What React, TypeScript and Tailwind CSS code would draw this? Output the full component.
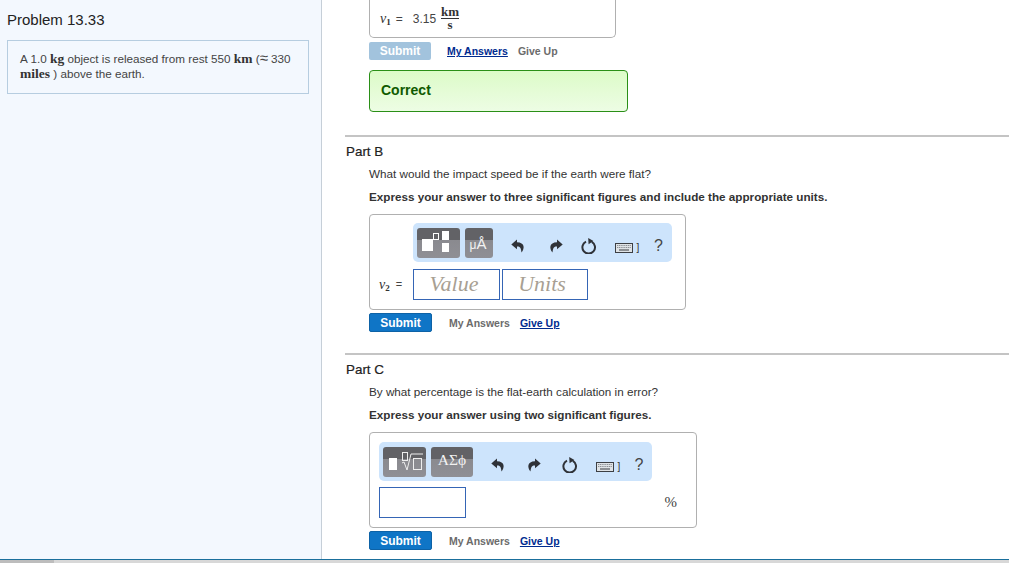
import React from "react";

const S = "font-['Liberation_Sans',Arial,sans-serif]";
const M = "font-['Liberation_Serif','Times_New_Roman',serif]";

function Undo({ flip }: { flip?: boolean }) {
  return (
    <svg width="14" height="14" viewBox="0 0 14 14" className={flip ? "-scale-x-100" : ""}>
      <path d="M6 0.5 L0.3 5.5 L6 10.2 V7.6 C8.8 7.4 10 8.8 10.5 13.5 C13.8 9.5 14 3.4 6 3.2 Z" fill="#2f3238" />
    </svg>
  );
}

function Reset() {
  return (
    <svg width="16" height="16" viewBox="0 0 16 16">
      <path d="M5 3.6 A6.3 6.3 0 1 0 10.8 3.8" fill="none" stroke="#2f3238" strokeWidth="2" />
      <path d="M7.2 0 L12.4 3 L7.6 6.2 Z" fill="#2f3238" />
    </svg>
  );
}

function Keyboard() {
  return (
    <div className="flex items-center gap-[4px]">
      <svg width="18" height="10" viewBox="0 0 18 10">
        <rect x="0.5" y="0.5" width="17" height="9" fill="#dfe3e6" stroke="#3c3f44" />
        <path d="M2 2.5h14M2 4.5h14" stroke="#8d9196" strokeWidth="1" strokeDasharray="1.2 .6" />
        <path d="M4 7h10" stroke="#55585c" strokeWidth="1.2" />
      </svg>
      <span className={`${S} text-[10px] leading-none text-[#333]`}>]</span>
    </div>
  );
}

function Tool({ w, children }: { w: string; children: React.ReactNode }) {
  return (
    <div className={`${w} h-[30px] rounded-[3px] bg-[linear-gradient(#626266_0,#626266_40%,#8a8a8f_40%,#8f8f95_100%)] flex items-center justify-center text-white overflow-hidden`}>
      {children}
    </div>
  );
}

function Actions({ widths }: { widths: string[] }) {
  return (
    <div className="flex items-center pt-[6px]">
      <div className={`${widths[0]} flex justify-center shrink-0`}><Undo /></div>
      <div className={`${widths[1]} flex justify-center shrink-0`}><Undo flip /></div>
      <div className={`${widths[2]} flex justify-center shrink-0`}><Reset /></div>
      <div className={`${widths[3]} flex justify-center shrink-0 pt-[5px]`}><Keyboard /></div>
      <div className={`${widths[4]} flex justify-center shrink-0 ${S} text-[16px] leading-none text-[#444]`}>?</div>
    </div>
  );
}

function LinkRow({ active }: { active: "my" | "give" }) {
  const link = "text-[#002b8f] underline";
  const dim = "text-[#6b6b6b]";
  return (
    <div className={`flex items-center ${S} text-[10.5px] font-bold leading-none pt-px`}>
      <span className={`${active === "my" ? "ml-[16px]" : "ml-[17px]"} ${active === "my" ? link : dim}`}>My Answers</span>
      <span className={`ml-[10px] ${active === "give" ? link : dim}`}>Give Up</span>
    </div>
  );
}

function Submit({ disabled }: { disabled?: boolean }) {
  return (
    <button className={`${S} rounded-[2px] text-[12px] font-bold leading-none text-white ${disabled ? "w-[62px] h-[18px] bg-[#a2c3dd]" : "w-[63px] h-[19px] bg-[#0f75c6] border border-[#0d62a6]"}`}>
      Submit
    </button>
  );
}

function Part({ title, text, bold }: { title: string; text: string; bold: string }) {
  return (
    <>
      <div className="h-[2px] bg-[#c4c4c4]" />
      <h2 className={`${S} ml-px mt-[7px] text-[13.4px] font-normal leading-[16px] text-[#222] [-webkit-text-stroke:0.2px_#222]`}>{title}</h2>
      <p className={`${S} ml-6 mt-[6px] text-[11.7px] leading-[16px] text-[#333]`}>{text}</p>
      <p className={`${S} ml-6 mt-[7px] text-[11.7px] font-bold leading-[16px] text-[#333]`}>{bold}</p>
    </>
  );
}

const mathBold = `${M} text-[13.5px] font-bold text-[#333]`;

export default function App() {
  return (
    <div className={`${S} w-[1009px] h-[563px] overflow-hidden flex flex-col bg-white`}>
      <div className="flex flex-1 min-h-0">
        <aside className="w-[322px] shrink-0 bg-[#f3f8fe] border-r border-[#c6cfd8] pl-[7px] pr-[12px] pt-[11px]">
          <h1 className="text-[15px] font-normal leading-[18px] text-[#222]">Problem 13.33</h1>
          <div className="mt-[11px] h-[54px] border border-[#b6cde0] px-3 py-[9px] text-[11.7px] leading-[15px] text-[#444]">
            A 1.0 <span className={mathBold}>kg</span> object is released from rest 550 <span className={mathBold}>km</span> (<span className="text-[15px] leading-none">≈</span> 330<br />
            <span className={mathBold}>miles</span> ) above the earth.
          </div>
        </aside>
        <main className="flex-1 min-w-0 pl-[23px]">
          <div className="ml-6 w-[247px] h-[38px] border border-t-0 border-[#b0b0b0] rounded-b-[5px] pl-[10px] flex items-center text-[12px] text-[#444]">
            <span className={`${M} italic text-[14px] text-[#333]`}>v<sub className="not-italic text-[9px] font-bold">1</sub></span>
            <span className="ml-[5px]">=</span>
            <span className="ml-[10px]">3.15</span>
            <span className={`${M} ml-[5px] inline-flex flex-col items-center font-bold text-[13px] leading-[10px] text-[#333]`}>
              <span className="border-b border-[#333] pb-[1px]">km</span>
              <span className="pt-[1px]">s</span>
            </span>
          </div>
          <div className="ml-6 mt-1 flex items-center"><Submit disabled /><LinkRow active="my" /></div>
          <div className="ml-6 mt-[10px] w-[259px] h-[42px] rounded-[4px] border border-[#2a8f17] bg-[linear-gradient(#dcfbc8,#edfde4)] pl-[11px] pb-[2px] flex items-center text-[14px] font-bold text-[#0f5a00]">Correct</div>

          <div className="mt-[23px]">
            <Part title="Part B" text="What would the impact speed be if the earth were flat?" bold="Express your answer to three significant figures and include the appropriate units." />
          </div>
          <div className="ml-6 mt-[9px] w-[317px] h-[96px] border border-[#b0b0b0] rounded-[4px] pt-2 pl-[43px]">
            <div className="w-[259px] h-[39px] rounded-[5px] bg-[#cde4fc] flex items-center pl-[4px]">
              <div className="flex gap-[5px]">
                <Tool w="w-[43px]">
                  <svg width="43" height="30" viewBox="0 0 43 30" fill="#fff">
                    <rect x="5" y="11" width="11" height="12" />
                    <rect x="16.5" y="5.5" width="5" height="6" fill="none" stroke="#fff" />
                    <rect x="25" y="3" width="7" height="9" />
                    <rect x="25" y="15" width="7" height="9" />
                  </svg>
                </Tool>
                <Tool w="w-[28px]">
                  <span className={`${S} flex items-baseline pt-[1px] pr-[2px] font-light text-[#f2f2f2]`}>
                    <span className="text-[12px] leading-none">μ</span>
                    <span className="text-[15px] leading-none">Å</span>
                  </span>
                </Tool>
              </div>
              <Actions widths={["w-[50px]", "w-[26px]", "w-[40px]", "w-[36px]", "w-[27px]"]} />
            </div>
            <div className="-ml-[34px] mt-[7px] flex items-center">
              <span className="w-[34px] text-[11px] text-[#444] flex items-center gap-[6px]">
                <span className={`${M} italic text-[14px] text-[#333]`}>v<sub className="not-italic text-[9px] font-bold">2</sub></span>
                <span>=</span>
              </span>
              <div className={`${M} w-[87px] h-[31px] border border-[#3565b5] pr-[5px] text-center italic text-[22px] leading-[27px] text-[#a89f93]`}>Value</div>
              <div className={`${M} ml-[2px] w-[86px] h-[31px] border border-[#3565b5] pr-[6px] text-center italic text-[22px] leading-[27px] text-[#a89f93]`}>Units</div>
            </div>
          </div>
          <div className="ml-6 mt-[3px] flex items-center"><Submit /><LinkRow active="give" /></div>

          <div className="mt-[21px]">
            <Part title="Part C" text="By what percentage is the flat-earth calculation in error?" bold="Express your answer using two significant figures." />
          </div>
          <div className="ml-6 mt-[9px] w-[328px] h-[96px] border border-[#b0b0b0] rounded-[4px] pt-[9px] pl-[9px] pr-[19px]">
            <div className="w-[273px] h-[39px] rounded-[5px] bg-[#cde4fc] flex items-center pl-[4px]">
              <div className="flex gap-[5px]">
                <Tool w="w-[43px]">
                  <svg width="43" height="30" viewBox="0 0 43 30" fill="#fff">
                    <rect x="6" y="11" width="8" height="12" />
                    <rect x="19.5" y="5.5" width="5" height="8" fill="none" stroke="#eee" />
                    <path d="M19 16 l2 -1 3 8 4 -16 h12" fill="none" stroke="#eee" />
                    <rect x="30.5" y="11.5" width="8" height="11" fill="none" stroke="#eee" />
                  </svg>
                </Tool>
                <Tool w="w-[42px]">
                  <span className={`${M} text-[15.5px] leading-none text-[#f2f2f2] -mt-[3px]`}>ΑΣϕ</span>
                </Tool>
              </div>
              <Actions widths={["w-[50px]", "w-[22px]", "w-[50px]", "w-[26px]", "w-[36px]"]} />
            </div>
            <div className="mt-[6px] flex items-center justify-between">
              <div className="w-[87px] h-[31px] border border-[#3565b5]" />
              <span className={`${M} text-[15px] text-[#444] -mt-px`}>%</span>
            </div>
          </div>
          <div className="ml-6 mt-[3px] flex items-center"><Submit /><LinkRow active="give" /></div>
        </main>
      </div>
      <div className="h-[4px] shrink-0 border-t border-[#1a6f9c] bg-[#d8d8d8]">
        <div className="w-[54px] h-full bg-[#bdbdbd]" />
      </div>
    </div>
  );
}
